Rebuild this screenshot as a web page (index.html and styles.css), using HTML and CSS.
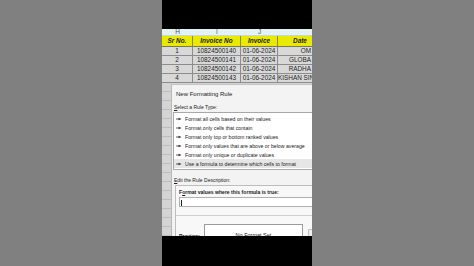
FILE: index.html
```html
<!DOCTYPE html>
<html>
<head>
<meta charset="utf-8">
<link rel="stylesheet" href="styles.css">
</head>
<body>
<div class="stage">
  <div class="topbar"></div>
  <div class="sheet">
    <div class="colhead">
      <div class="ch">H</div><div class="ch">I</div><div class="ch">J</div><div class="ch"></div>
    </div>
    <div class="grid">
      <div class="hd">Sr No.</div><div class="hd">Invoice No</div><div class="hd">Invoice</div><div class="hd date">Date</div>
      <div class="c ctr">1</div><div class="c ctr">10824500140</div><div class="c ctr">01-06-2024</div><div class="c rt">OM</div>
      <div class="c ctr">2</div><div class="c ctr">10824500141</div><div class="c ctr">01-06-2024</div><div class="c rt">GLOBA</div>
      <div class="c ctr">3</div><div class="c ctr">10824500142</div><div class="c ctr">01-06-2024</div><div class="c rt">RADHA</div>
      <div class="c ctr">4</div><div class="c ctr">10824500143</div><div class="c ctr">01-06-2024</div><div class="c rt">KISHAN SIN</div>
    </div>
    <div class="filler"></div>

    <div class="dialog">
      <div class="title">New Formatting Rule</div>
      <div class="label"><u>S</u>elect a Rule Type:</div>
      <div class="list">
        <div class="item"><svg class="arr" viewBox="0 0 7 4"><path d="M0 2H3.5" stroke="#333" stroke-width="0.9"/><polygon points="3,0.4 6.5,2 3,3.6" fill="#333"/></svg>Format all cells based on their values</div>
        <div class="item"><svg class="arr" viewBox="0 0 7 4"><path d="M0 2H3.5" stroke="#333" stroke-width="0.9"/><polygon points="3,0.4 6.5,2 3,3.6" fill="#333"/></svg>Format only cells that contain</div>
        <div class="item"><svg class="arr" viewBox="0 0 7 4"><path d="M0 2H3.5" stroke="#333" stroke-width="0.9"/><polygon points="3,0.4 6.5,2 3,3.6" fill="#333"/></svg>Format only top or bottom ranked values</div>
        <div class="item"><svg class="arr" viewBox="0 0 7 4"><path d="M0 2H3.5" stroke="#333" stroke-width="0.9"/><polygon points="3,0.4 6.5,2 3,3.6" fill="#333"/></svg>Format only values that are above or below average</div>
        <div class="item"><svg class="arr" viewBox="0 0 7 4"><path d="M0 2H3.5" stroke="#333" stroke-width="0.9"/><polygon points="3,0.4 6.5,2 3,3.6" fill="#333"/></svg>Format only unique or duplicate values</div>
        <div class="item sel"><svg class="arr" viewBox="0 0 7 4"><path d="M0 2H3.5" stroke="#333" stroke-width="0.9"/><polygon points="3,0.4 6.5,2 3,3.6" fill="#333"/></svg>Use a formula to determine which cells to format</div>
      </div>
      <div class="label desc-label"><u>E</u>dit the Rule Description:</div>
      <div class="descbox">
        <div class="bold">F<u>o</u>rmat values where this formula is true:</div>
        <div class="input"><span class="caret"></span></div>
        <div class="sep"></div>
        <div class="preview-row">
          <div class="bold pv">Preview:</div>
          <div class="pvbox">No Format Set</div>
          <div class="fmtbtn"></div>
        </div>
      </div>
    </div>
  </div>
  <div class="bottombar"></div>
</div>
</body>
</html>
```

FILE: styles.css
```css
* { box-sizing: border-box; }
html, body { margin: 0; padding: 0; }
body {
  width: 474px;
  height: 266px;
  background: #808080;
  overflow: hidden;
  font-family: "Liberation Sans", Arial, sans-serif;
}
.stage {
  margin-left: 162px;
  width: 150px;
  height: 266px;
  background: #000;
  display: flex;
  flex-direction: column;
  overflow: hidden;
}
.topbar { height: 29px; flex: none; background: #000; }
.bottombar { height: 30px; flex: none; background: #000; }
.sheet {
  position: relative;
  height: 207px;
  flex: none;
  overflow: hidden;
  background: #d3d3d3;
  display: flex;
  flex-direction: column;
}
.colhead {
  display: grid;
  grid-template-columns: 31px 48px 37px 44px;
  height: 7px;
  background: #e2f3f3;
  border-bottom: 1px solid #c8d6d6;
}
.ch {
  font-size: 6.5px;
  line-height: 6px;
  color: #555;
  text-align: center;
}
.grid {
  display: grid;
  grid-template-columns: 31px 48px 37px 34px;
  grid-template-rows: 11px repeat(4, 9px);
  width: 150px;
}
.hd {
  background: #eaea00;
  border-right: 1px solid #8a8a40;
  border-bottom: 1px solid #7a7a50;
  font-weight: bold;
  font-style: italic;
  font-size: 6.4px;
  line-height: 10px;
  color: #1a1a1a;
  text-align: center;
  white-space: nowrap;
}
.hd.date { padding-left: 10px; border-right: none; }
.c {
  background: #d8d8d8;
  border-right: 1px solid #8c8c8c;
  border-bottom: 1px solid #8c8c8c;
  font-size: 6.4px;
  line-height: 8px;
  color: #1e1e1e;
  white-space: nowrap;
  overflow: hidden;
}
.ctr { text-align: center; }
.rt { text-align: right; padding-right: 1px; border-right: none; }
.filler {
  flex: 1;
  background-color: #d4d4d4;
  background-image: repeating-linear-gradient(to bottom, transparent 0, transparent 8px, #bdbdbd 8px, #bdbdbd 9px);
}
.dialog {
  position: absolute;
  top: 55px;
  left: 9px;
  width: 150px;
  height: 160px;
  background: #f3f3f3;
  border-left: 1px solid #b8b8b8;
  border-top: 1px solid #c4c4c4;
  color: #222;
}
.title {
  font-size: 6px;
  line-height: 8px;
  padding: 5px 0 0 4px;
  height: 19px;
  color: #222;
}
.label {
  font-size: 5px;
  line-height: 6px;
  padding-left: 2px;
  color: #222;
}
.label u { text-decoration: underline; }
.list {
  margin: 2px 0 0 1px;
  height: 58px;
  background: #fff;
  border: 1px solid #a8a8a8;
  border-right: none;
  padding-top: 1px;
}
.item {
  height: 9px;
  display: flex;
  align-items: center;
  font-size: 5.2px;
  white-space: nowrap;
  color: #222;
  padding-left: 2px;
}
.item.sel { background: #e6e6e6; }
.arr { width: 6px; height: 4px; margin-right: 3px; flex: none; }
.desc-label { margin-top: 7px; }
.descbox {
  margin: 2px 0 0 3px;
  height: 70px;
  background: #f8f8f8;
  border: 1px solid #bdbdbd;
  border-right: none;
  padding: 3px 0 0 3px;
}
.bold {
  font-weight: bold;
  font-size: 5.1px;
  line-height: 6px;
  color: #1a1a1a;
  white-space: nowrap;
}
.input {
  margin-top: 2px;
  height: 10px;
  background: #fff;
  border: 1px solid #b0b0b0;
  border-right: none;
  position: relative;
}
.caret {
  position: absolute;
  left: 1px;
  top: 2px;
  width: 1px;
  height: 6px;
  background: #222;
}
.sep {
  margin: 8px 0 0 -3px;
  height: 1px;
  background: #d0d0d0;
}
.preview-row {
  display: flex;
  align-items: flex-start;
  margin-top: 8px;
}
.pv { margin-top: 9px; width: 25px; flex: none; }
.pvbox {
  width: 99px;
  height: 20px;
  flex: none;
  background: #fff;
  border: 1px solid #9a9a9a;
  font-size: 5.5px;
  text-align: center;
  padding-top: 7px;
  color: #222;
}
.fmtbtn {
  margin: 5px 0 0 5px;
  width: 10px;
  height: 12px;
  border: 1px solid #c0c0c0;
  border-radius: 1px;
  background: #efefef;
}
```
